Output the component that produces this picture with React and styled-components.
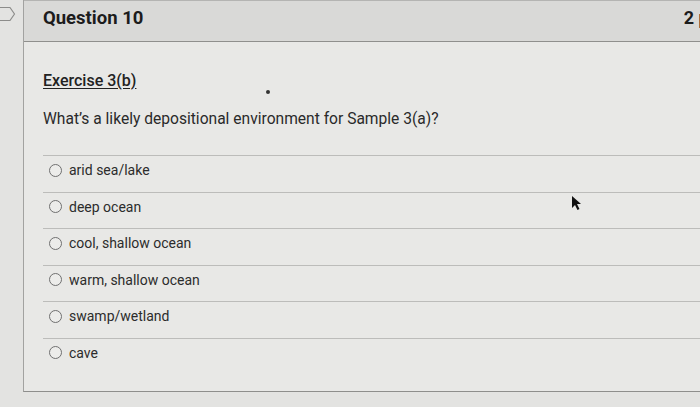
import React from "react";
import styled, { createGlobalStyle } from "styled-components";

const options = [
  "arid sea/lake",
  "deep ocean",
  "cool, shallow ocean",
  "warm, shallow ocean",
  "swamp/wetland",
  "cave",
];

const App = () => {
  return (
    <>
      <GlobalStyle />
      <Page>
        <Gutter>
          <FlagIcon width="16" height="16" viewBox="0 0 16 16">
            <path
              d="M-2 1.5 H10 L14.5 8 L10 14.5 H-2"
              fill="none"
              stroke="#8c8c8a"
              strokeWidth="1.2"
              strokeLinejoin="round"
            />
          </FlagIcon>
        </Gutter>
        <Card>
          <Header>
            <Title>Question 10</Title>
            <Points>2 pts</Points>
          </Header>
          <Body>
            <Exercise>Exercise 3(b)</Exercise>
            <Prompt>
              What’s a likely depositional environment for Sample 3(a)?
            </Prompt>
            <Options>
              {options.map((o) => (
                <Option key={o}>
                  <Radio />
                  <Label>{o}</Label>
                </Option>
              ))}
            </Options>
          </Body>
          <Speck />
          <Cursor width="12" height="16" viewBox="0 0 12 16">
            <path d="M1 1 L1 13 L4 10 L6.5 15 L8.5 14 L6 9 L10 9 Z" fill="#111" />
          </Cursor>
        </Card>
      </Page>
    </>
  );
};

export default App;

const GlobalStyle = createGlobalStyle`
  html, body {
    margin: 0;
    padding: 0;
    background: #e4e4e2;
  }
  body {
    font-family: Roboto, "Liberation Sans", Arial, sans-serif;
    color: #2a2a2a;
  }
`;

const Page = styled.div`
  display: flex;
  width: 700px;
  height: 407px;
  overflow: hidden;
  background: #e3e3e1;
`;

const Gutter = styled.div`
  width: 23px;
  flex-shrink: 0;
  padding-top: 6px;
`;

const FlagIcon = styled.svg`
  display: block;
`;

const Card = styled.div`
  position: relative;
  flex: 1;
  height: 391px;
  border-left: 1px solid #a2a2a0;
  border-bottom: 1px solid #8e8e8c;
  background: #e8e8e6;
  display: flex;
  flex-direction: column;
`;

const Header = styled.div`
  height: 42px;
  box-sizing: border-box;
  display: flex;
  align-items: center;
  justify-content: space-between;
  padding-left: 19px;
  background: #d9d9d7;
  border-top: 1px solid #b4b4b2;
  border-bottom: 1px solid #8f8f8d;
  overflow: hidden;
`;

const Title = styled.div`
  font-size: 18.5px;
  font-weight: 700;
  color: #1c1c1c;
  margin-top: -7px;
`;

const Points = styled.div`
  font-size: 18px;
  font-weight: 700;
  color: #1c1c1c;
  margin-right: -24px;
  white-space: nowrap;
  margin-top: -7px;
`;

const Body = styled.div`
  padding: 29px 0 0 19px;
`;

const Exercise = styled.div`
  font-size: 16px;
  line-height: 20px;
  font-weight: 500;
  text-decoration: underline;
  text-underline-offset: 2px;
  color: #222;
`;

const Prompt = styled.div`
  margin-top: 18px;
  font-size: 15.6px;
  line-height: 20px;
  color: #2a2a2a;
`;

const Options = styled.div`
  margin-top: 26px;
`;

const Option = styled.div`
  height: 36.6px;
  box-sizing: border-box;
  border-top: 1px solid #bcbcba;
  display: flex;
  align-items: flex-start;
  padding: 4px 0 0 6px;
  gap: 7px;
`;

const Radio = styled.span`
  width: 13px;
  height: 13px;
  box-sizing: border-box;
  margin-top: 3.5px;
  border-radius: 50%;
  border: 1.5px solid #707070;
  background: #ececea;
  flex-shrink: 0;
`;

const Label = styled.span`
  font-size: 14px;
  line-height: 20px;
  color: #2c2c2c;
`;

const Speck = styled.span`
  position: absolute;
  left: 242px;
  top: 90px;
  width: 4px;
  height: 4px;
  border-radius: 50%;
  background: #333;
`;

const Cursor = styled.svg`
  position: absolute;
  left: 547px;
  top: 195px;
`;
